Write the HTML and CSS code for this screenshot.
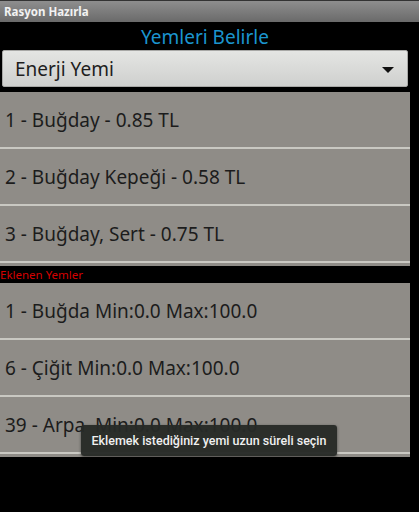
FILE: index.html
```html
<!DOCTYPE html>
<html lang="tr">
<head>
  <meta charset="UTF-8" />
  <meta name="viewport" content="width=device-width, initial-scale=1" />
  <title>Rasyon Hazırla</title>
  <link rel="stylesheet" href="styles.css">
</head>
<body>
  <header class="titlebar">Rasyon Hazırla</header>

  <main class="screen">
    <h1 class="heading">Yemleri Belirle</h1>

    <div class="spinner">
      <span>Enerji Yemi</span>
      <span class="caret"></span>
    </div>

    <ul class="list">
      <li>1 - Buğday - 0.85 TL</li>
      <li>2 - Buğday Kepeği - 0.58 TL</li>
      <li>3 - Buğday, Sert - 0.75 TL</li>
    </ul>

    <p class="label">Eklenen Yemler</p>

    <ul class="list">
      <li>1 - Buğda Min:0.0 Max:100.0</li>
      <li>6 - Çiğit Min:0.0 Max:100.0</li>
      <li>39 - Arpa  Min:0.0 Max:100.0</li>
    </ul>
  </main>

  <div class="toast">Eklemek istediğiniz yemi uzun süreli seçin</div>
</body>
</html>
```

FILE: styles.css
```css
* {
  margin: 0;
  padding: 0;
  box-sizing: border-box;
}
body {
  font-family: 'Noto Sans', 'DejaVu Sans', sans-serif;
  background: #000;
  width: 419px;
  height: 512px;
  overflow: hidden;
  position: relative;
}
.titlebar {
  height: 22px;
  padding-left: 4px;
  line-height: 22px;
  font-size: 11.5px;
  font-weight: bold;
  color: #f2f2f2;
  background: linear-gradient(#8e8e8e, #6a6a6a);
  border-top: 1px solid #333;
}
.screen {
  width: 410px;
}
.heading {
  height: 28px;
  line-height: 30px;
  text-align: center;
  font-size: 19px;
  font-weight: normal;
  color: #1b95cf;
}
.spinner {
  height: 37px;
  margin: 0 2px 0 2px;
  padding: 0 13px 0 12px;
  display: flex;
  align-items: center;
  justify-content: space-between;
  font-size: 19px;
  color: #1e1e1e;
  background: linear-gradient(#e4e5e3, #cfd0ce);
  border: 1px solid #a8a8a6;
  border-radius: 2px;
}
.caret {
  width: 0;
  height: 0;
  border-left: 6px solid transparent;
  border-right: 6px solid transparent;
  border-top: 6px solid #111;
  margin-top: 2px;
}
.list {
  list-style: none;
  margin-top: 5px;
  background: #8f8c87;
  padding-bottom: 3px;
}
.list li {
  height: 57px;
  padding-left: 5px;
  padding-top: 1px;
  display: flex;
  align-items: center;
  font-size: 19px;
  color: #1c1c1c;
  white-space: pre;
  border-bottom: 2px solid #c9c8c2;
}
.label {
  height: 17px;
  line-height: 17px;
  font-size: 11.5px;
  color: #d40000;
}
.label + .list {
  margin-top: 0;
}
.toast {
  position: absolute;
  left: 81px;
  top: 425px;
  width: 256px;
  height: 31px;
  line-height: 31px;
  text-align: center;
  font-family: Roboto, 'Noto Sans', sans-serif;
  font-size: 12.5px;
  font-weight: 500;
  color: #f0f0f0;
  background: rgba(38, 42, 38, 0.96);
  border-radius: 3px;
  box-shadow: 0 1px 3px rgba(0, 0, 0, 0.5);
}
```
